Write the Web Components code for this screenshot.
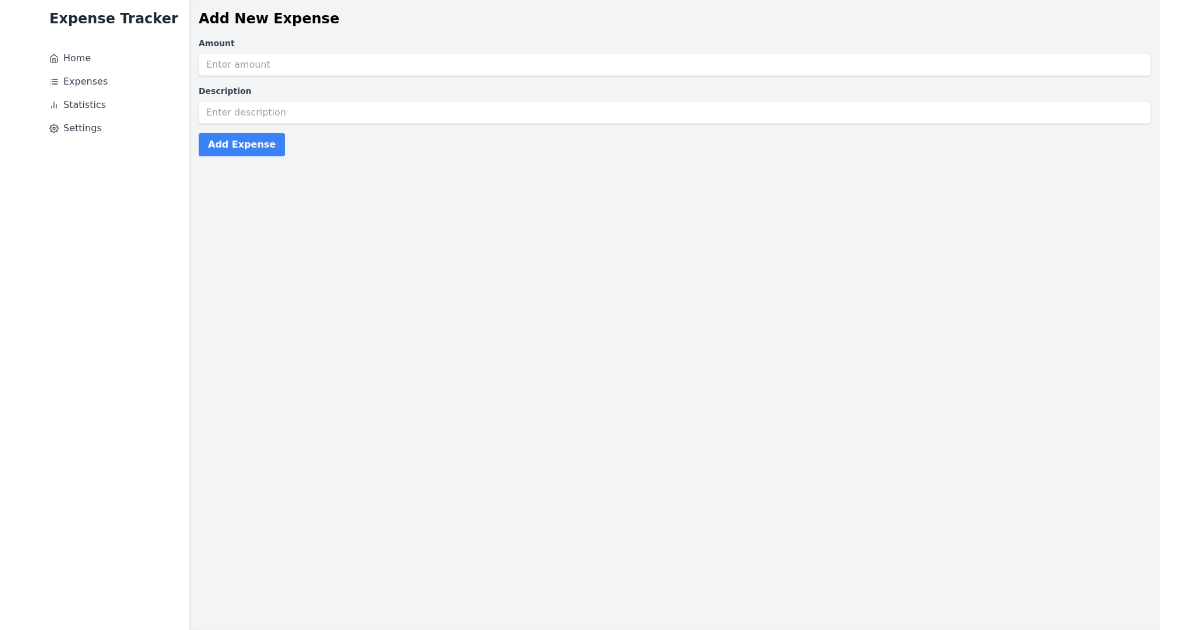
<!DOCTYPE html>
<html lang="en">
<head>
<meta charset="utf-8">
<title>Expense Tracker</title>
<style>
  html, body { margin: 0; height: 100%; background: #fff; overflow: hidden; }
  body { font-family: "DejaVu Sans", sans-serif; }
</style>
</head>
<body>
<expense-app>
  <side-bar slot="side" heading="Expense Tracker">
    <nav-link icon="home">Home</nav-link>
    <nav-link icon="list">Expenses</nav-link>
    <nav-link icon="chart">Statistics</nav-link>
    <nav-link icon="gear">Settings</nav-link>
  </side-bar>
  <expense-form slot="main" heading="Add New Expense">
    <form-field label="Amount" placeholder="Enter amount"></form-field>
    <form-field label="Description" placeholder="Enter description"></form-field>
  </expense-form>
</expense-app>

<script>
const ICONS = {
  home: `<path d="M3 9l9-7 9 7v11a2 2 0 0 1-2 2H5a2 2 0 0 1-2-2z"/><path d="M9 22V12h6v10"/>`,
  list: `<path d="M8 6h13M8 12h13M8 18h13M3 6h.01M3 12h.01M3 18h.01"/>`,
  chart: `<path d="M18 20V10M12 20V4M6 20v-6"/>`,
  gear: `<circle cx="12" cy="12" r="3"/><path d="M19.4 15a1.65 1.65 0 0 0 .33 1.82l.06.06a2 2 0 0 1 0 2.83 2 2 0 0 1-2.83 0l-.06-.06a1.65 1.65 0 0 0-1.82-.33 1.65 1.65 0 0 0-1 1.51V21a2 2 0 0 1-2 2 2 2 0 0 1-2-2v-.09A1.65 1.65 0 0 0 9 19.4a1.65 1.65 0 0 0-1.82.33l-.06.06a2 2 0 0 1-2.83 0 2 2 0 0 1 0-2.83l.06-.06a1.65 1.65 0 0 0 .33-1.82 1.65 1.65 0 0 0-1.51-1H3a2 2 0 0 1-2-2 2 2 0 0 1 2-2h.09A1.65 1.65 0 0 0 4.6 9a1.65 1.65 0 0 0-.33-1.82l-.06-.06a2 2 0 0 1 0-2.83 2 2 0 0 1 2.83 0l.06.06a1.65 1.65 0 0 0 1.82.33H9a1.65 1.65 0 0 0 1-1.51V3a2 2 0 0 1 2-2 2 2 0 0 1 2 2v.09a1.65 1.65 0 0 0 1 1.51 1.65 1.65 0 0 0 1.82-.33l.06-.06a2 2 0 0 1 2.83 0 2 2 0 0 1 0 2.83l-.06.06a1.65 1.65 0 0 0-.33 1.82V9a1.65 1.65 0 0 0 1.51 1H21a2 2 0 0 1 2 2 2 2 0 0 1-2 2h-.09a1.65 1.65 0 0 0-1.51 1z"/>`
};

class ExpenseApp extends HTMLElement {
  constructor() {
    super();
    this.attachShadow({ mode: "open" });
    // the design is 1920x1080, shown at 7/12 inside the 1120x630 frame
    this.shadowRoot.innerHTML = `
    <style>
      :host {
        display: block;
        width: 1120px;
        height: 630px;
        margin: 0 auto;
        overflow: hidden;
      }
      .stage {
        display: flex;
        width: 1920px;
        height: 1080px;
        transform: scale(.58333);
        transform-origin: 0 0;
        will-change: transform;
      }
    </style>
    <div class="stage">
      <slot name="side"></slot>
      <slot name="main"></slot>
    </div>`;
  }
}

class SideBar extends HTMLElement {
  constructor() {
    super();
    this.attachShadow({ mode: "open" });
  }

  connectedCallback() {
    this.shadowRoot.innerHTML = `
    <style>
      :host {
        display: block;
        width: 256px;
        flex: none;
        box-sizing: border-box;
        padding: 16px;
        background: #fff;
      }
      h1 {
        margin: 0 0 32px;
        font-size: 24px;
        line-height: 32px;
        font-weight: 700;
        color: #1f2937;
        white-space: nowrap;
      }
      nav { display: flex; flex-direction: column; }
    </style>
    <h1>${this.getAttribute("heading")}</h1>
    <nav><slot></slot></nav>`;
  }
}

class NavLink extends HTMLElement {
  constructor() {
    super();
    this.attachShadow({ mode: "open" });
  }

  connectedCallback() {
    this.shadowRoot.innerHTML = `
    <style>
      :host {
        display: flex;
        align-items: center;
        gap: 8px;
        padding: 8px 0;
        font-size: 16px;
        line-height: 24px;
        color: #374151;
      }
      svg {
        width: 16px;
        height: 16px;
        flex: none;
        fill: none;
        stroke: currentColor;
        stroke-width: 2;
        stroke-linecap: round;
        stroke-linejoin: round;
      }
    </style>
    <svg viewBox="0 0 24 24">${ICONS[this.getAttribute("icon")]}</svg>
    <span><slot></slot></span>`;
  }
}

class ExpenseForm extends HTMLElement {
  constructor() {
    super();
    this.attachShadow({ mode: "open" });
  }

  connectedCallback() {
    this.shadowRoot.innerHTML = `
    <style>
      :host {
        display: block;
        flex: 1;
        min-width: 0;
        box-sizing: border-box;
        padding: 16px;
        background: #f3f4f6;
        box-shadow: inset 4px 0 4px -1px rgba(0, 0, 0, .05);
      }
      h2 {
        margin: 0 0 16px;
        font-size: 24px;
        line-height: 32px;
        font-weight: 700;
        color: #000;
      }
      button {
        display: block;
        padding: 8px 16px;
        border: 0;
        border-radius: 4px;
        background: #3b82f6;
        color: #fff;
        font: 700 16px/24px "DejaVu Sans", sans-serif;
      }
    </style>
    <h2>${this.getAttribute("heading")}</h2>
    <slot></slot>
    <button type="button">Add Expense</button>`;
  }
}

class FormField extends HTMLElement {
  constructor() {
    super();
    this.attachShadow({ mode: "open" });
  }

  connectedCallback() {
    this.shadowRoot.innerHTML = `
    <style>
      :host { display: block; margin-bottom: 16px; }
      label {
        display: block;
        margin-bottom: 8px;
        font-size: 14px;
        line-height: 20px;
        font-weight: 700;
        color: #374151;
      }
      input {
        display: block;
        width: 100%;
        height: 38px;
        box-sizing: border-box;
        padding: 0 12px 2px;
        border: 1px solid #f0f1f3;
        outline: 0;
        border-radius: 4px;
        background: #fff;
        box-shadow: 0 1px 3px rgba(0, 0, 0, .1), 0 1px 2px rgba(0, 0, 0, .06);
        font: 16px "DejaVu Sans", sans-serif;
        color: #374151;
      }
      input::placeholder { color: #9ca3af; opacity: 1; }
    </style>
    <label for="f">${this.getAttribute("label")}</label>
    <input id="f" type="text" placeholder="${this.getAttribute("placeholder")}">`;
  }
}

customElements.define("expense-app", ExpenseApp);
customElements.define("side-bar", SideBar);
customElements.define("nav-link", NavLink);
customElements.define("expense-form", ExpenseForm);
customElements.define("form-field", FormField);
</script>
</body>
</html>
